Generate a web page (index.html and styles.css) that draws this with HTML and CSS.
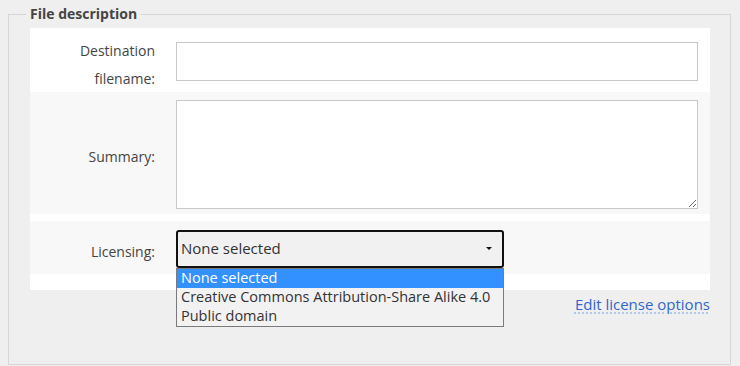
FILE: index.html
```html
<!DOCTYPE html>
<html lang="en">
<head>
  <meta charset="UTF-8">
  <title>File description</title>
  <link rel="stylesheet" href="styles.css">
</head>
<body>
  <fieldset class="desc">
    <legend>File description</legend>

    <div class="rows">
      <div class="row row-top">
        <label class="label" for="dest">Destination filename:</label>
        <div class="field"><input type="text" id="dest" class="text-input"></div>
      </div>

      <div class="row row-alt">
        <label class="label" for="summary">Summary:</label>
        <div class="field"><textarea id="summary" class="text-area"></textarea></div>
      </div>

      <div class="spacer"></div>

      <div class="row row-alt row-license">
        <span class="label">Licensing:</span>
        <div class="field">
          <div class="select">
            <span>None selected</span>
            <span class="arrow"></span>
          </div>
          <ul class="options">
            <li class="active">None selected</li>
            <li>Creative Commons Attribution-Share Alike 4.0</li>
            <li>Public domain</li>
          </ul>
        </div>
      </div>

      <div class="spacer spacer-end"></div>
    </div>

    <div class="links">
      <a href="#" class="edit-link">Edit license options</a>
    </div>
  </fieldset>
</body>
</html>
```

FILE: styles.css
```css
body {
  margin: 0;
  padding: 0 9px 0 8px;
  background-color: #efefef;
  font-family: "Open Sans", "Noto Sans", sans-serif;
  font-size: 14px;
  color: #454545;
}

.desc {
  margin: 0;
  padding: 0 20px 45px 21px;
  border: 1px solid #d6d6d6;
  min-width: 0;
}

.desc legend {
  margin-left: -4px;
  padding: 0 4px;
  font-weight: bold;
  font-size: 14px;
  line-height: 28px;
  color: #444;
}

.rows {
  background-color: #ffffff;
}

.row {
  display: flex;
  align-items: center;
}

.row-alt {
  background-color: #f8f8f8;
}

.label {
  width: 125px;
  padding-right: 21px;
  padding-top: 8px;
  flex-shrink: 0;
  text-align: right;
  line-height: 28px;
  color: #444;
}

.row-top {
  height: 64px;
  align-items: flex-start;
}

.row-top .label {
  padding-top: 9px;
}

.row-top .field {
  padding-top: 14px;
}

.field {
  flex: 1;
  padding-right: 12px;
  position: relative;
}

.text-input {
  display: block;
  box-sizing: border-box;
  width: 100%;
  height: 39px;
  margin: 0;
  border: 1px solid #c8c8c8;
  background-color: #ffffff;
}

.row-alt .field {
  padding-top: 8px;
  padding-bottom: 5px;
}

.text-area {
  display: block;
  box-sizing: border-box;
  width: 100%;
  height: 109px;
  margin: 0;
  border: 1px solid #c8c8c8;
  background-color: #ffffff;
  resize: vertical;
}

.spacer {
  height: 7px;
}

.spacer-end {
  height: 16px;
}

.row-license .field {
  padding-top: 9px;
  padding-bottom: 6px;
}

.select {
  box-sizing: border-box;
  width: 328px;
  height: 38px;
  padding: 0 10px 2px 3px;
  display: flex;
  align-items: center;
  justify-content: space-between;
  border: 2px solid #111;
  border-radius: 3px;
  background-color: #f1f1f1;
  color: #333;
  font-size: 15px;
}

.arrow {
  width: 0;
  height: 0;
  border-left: 3px solid transparent;
  border-right: 3px solid transparent;
  border-top: 3px solid #111;
}

.options {
  position: absolute;
  top: 47px;
  left: 0;
  z-index: 2;
  box-sizing: border-box;
  width: 328px;
  margin: 0;
  padding: 0;
  list-style: none;
  border: 1px solid #7a7a7a;
  background-color: #f2f2f2;
  color: #333;
  font-size: 14.5px;
}

.options li {
  height: 19px;
  line-height: 18px;
  padding-left: 4px;
  white-space: nowrap;
}

.options li.active {
  background-color: #3390ff;
  color: #ffffff;
}

.links {
  text-align: right;
  line-height: 28px;
}

.edit-link {
  color: #3366cc;
  font-size: 15px;
  text-decoration: underline dotted #9bbbe6;
  text-underline-offset: 3px;
}
```
